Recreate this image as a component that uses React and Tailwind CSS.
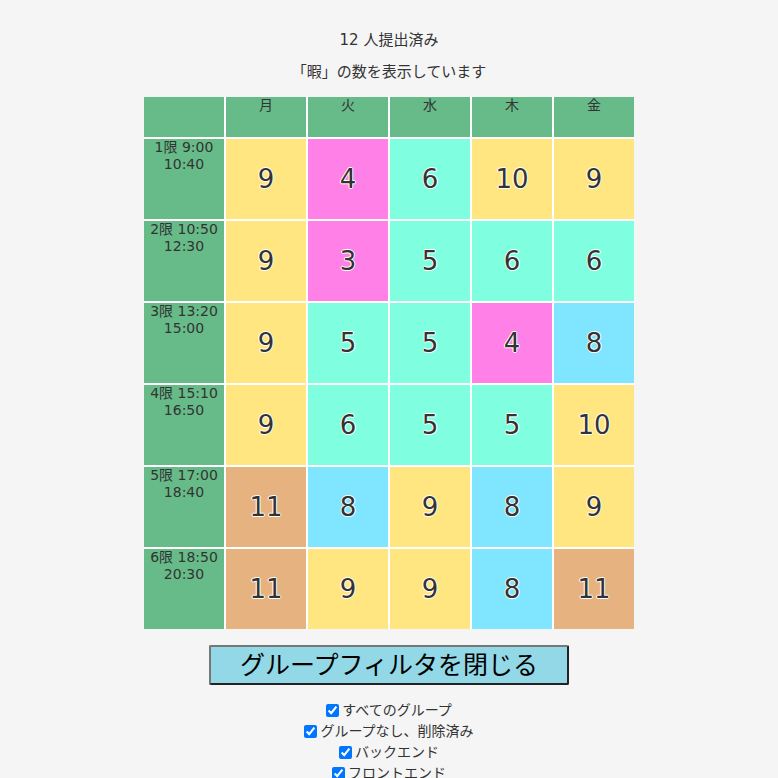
import { useState } from "react";

const days = ["月", "火", "水", "木", "金"];

const periods = [
  { label: "1限 9:00", end: "10:40", counts: [9, 4, 6, 10, 9] },
  { label: "2限 10:50", end: "12:30", counts: [9, 3, 5, 6, 6] },
  { label: "3限 13:20", end: "15:00", counts: [9, 5, 5, 4, 8] },
  { label: "4限 15:10", end: "16:50", counts: [9, 6, 5, 5, 10] },
  { label: "5限 17:00", end: "18:40", counts: [11, 8, 9, 8, 9] },
  { label: "6限 18:50", end: "20:30", counts: [11, 9, 9, 8, 11] },
];

const groups = ["すべてのグループ", "グループなし、削除済み", "バックエンド", "フロントエンド"];

// cell colour by how many people are free
const cellColor = (n) => {
  if (n <= 4) return "bg-[#ff80e6]";
  if (n <= 6) return "bg-[#80ffe0]";
  if (n <= 8) return "bg-[#80e6ff]";
  if (n <= 10) return "bg-[#ffe680]";
  return "bg-[#e6b380]";
};

const App = () => {
  const [checked, setChecked] = useState(groups.map(() => true));

  const toggle = (i) => {
    const copy = [...checked];
    copy[i] = !copy[i];
    setChecked(copy);
  };

  return (
    <div
      className="min-h-screen bg-[#f5f5f5] text-[#333] flex flex-col items-center"
      style={{ fontFamily: '"DejaVu Sans", "Noto Sans CJK JP", sans-serif' }}
    >
      <p className="mt-[31px] text-[15px] leading-[18px]">12 人提出済み</p>
      <p className="mt-[14px] text-[15px] leading-[18px]">「暇」の数を表示しています</p>

      <div className="mt-[16px] grid grid-cols-[repeat(6,80px)] grid-rows-[40px_repeat(6,80px)] gap-[2px] bg-white">
        <div className="bg-[#66bb88]" />
        {days.map((day) => (
          <div key={day} className="bg-[#66bb88] text-center text-[14px] leading-[16px]">
            {day}
          </div>
        ))}
        {periods.map((p) => (
          <>
            <div key={p.label} className="bg-[#66bb88] text-center text-[14px] leading-[17px]">
              <div>{p.label}</div>
              <div>{p.end}</div>
            </div>
            {p.counts.map((n, j) => (
              <div
                key={p.label + j}
                className={`${cellColor(n)} flex items-center justify-center text-[26px] [text-shadow:1px_0_0_#fff,-1px_0_0_#fff,0_1px_0_#fff,0_-1px_0_#fff]`}
              >
                {n}
              </div>
            ))}
          </>
        ))}
      </div>

      <button className="mt-[16px] w-[360px] h-[40px] bg-[#92d8e6] text-black text-[25px] leading-none border-2 border-t-[#777] border-l-[#777] border-r-[#222] border-b-[#222] rounded-[2px]">
        グループフィルタを閉じる
      </button>

      <div className="mt-[15px] flex flex-col items-center text-[14px] leading-[21px]">
        {groups.map((g, i) => (
          <label key={g} className="flex items-center gap-[3px]">
            <input
              type="checkbox"
              checked={checked[i]}
              onChange={() => toggle(i)}
              className="w-[13px] h-[13px] m-0"
            />
            <span>{g}</span>
          </label>
        ))}
      </div>
    </div>
  );
};

export default App;
